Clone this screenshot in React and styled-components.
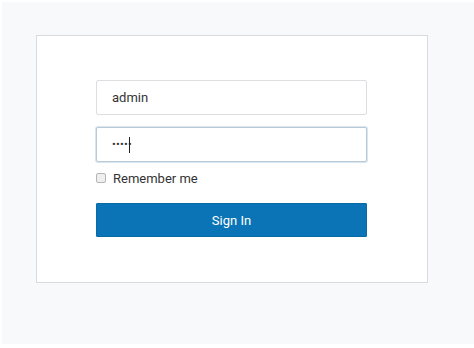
import React from "react";
import styled, { createGlobalStyle } from "styled-components";

const Global = createGlobalStyle`
  html, body { margin: 0; padding: 0; background: #ffffff; }
  body { font-family: Roboto, "Liberation Sans", Arial, sans-serif; }
  * { box-sizing: border-box; }
`;

const Page = styled.div`
  margin: 2px 0 0 2px;
  height: 342px;
  background: #f8f9fb;
  padding: 33px 0 0 34px;
`;

const Card = styled.form`
  width: 392px;
  height: 248px;
  background: #ffffff;
  border: 1px solid #d9dbde;
  padding: 44px 60px 0 59px;
  display: flex;
  flex-direction: column;
`;

const FieldWrap = styled.div`
  position: relative;
  margin-bottom: ${(p) => p.$gap}px;
`;

const Field = styled.input`
  display: block;
  width: 271px;
  height: 35px;
  border: 1px solid ${(p) => (p.$focused ? "#b8cad8" : "#dcdee1")};
  box-shadow: ${(p) => (p.$focused ? "0 0 0 1px #dae5ee" : "none")};
  border-radius: 2px;
  padding: 0 15px;
  font-family: Roboto, "Liberation Sans", Arial, sans-serif;
  font-size: ${(p) => (p.$small ? 11 : 13)}px;
  letter-spacing: ${(p) => (p.$small ? "0.3px" : "0")};
  color: #333333;
  background: #ffffff;
  outline: none;
  caret-color: transparent;
`;

const Caret = styled.span`
  position: absolute;
  left: ${(p) => p.$left}px;
  top: 10px;
  width: 1px;
  height: 16px;
  background: #222;
`;

const RememberRow = styled.label`
  display: flex;
  align-items: center;
  gap: 7px;
  font-size: 13px;
  color: #333333;
  height: 16px;
  margin-top: 8px;
  margin-bottom: 17px;
`;

const Check = styled.span`
  width: 10px;
  height: 10px;
  border: 1px solid #b4b6b9;
  border-radius: 2px;
  background: #efefef;
  display: inline-block;
`;

const Button = styled.button`
  width: 271px;
  height: 34px;
  border: 1px solid #0a6aa8;
  background: #0b74b6;
  color: #ffffff;
  font-family: Roboto, "Liberation Sans", Arial, sans-serif;
  font-size: 13px;
  font-weight: 400;
  border-radius: 1px;
  cursor: pointer;
`;

export default function App() {
  return (
    <>
      <Global />
      <Page>
        <Card onSubmit={(e) => e.preventDefault()}>
          <FieldWrap $gap={12}>
            <Field type="text" defaultValue="admin" />
          </FieldWrap>
          <FieldWrap $gap={0}>
            <Field type="password" defaultValue="admin" $focused $small />
            <Caret $left={33} />
          </FieldWrap>
          <RememberRow>
            <Check />
            Remember me
          </RememberRow>
          <Button type="submit">Sign In</Button>
        </Card>
      </Page>
    </>
  );
}
